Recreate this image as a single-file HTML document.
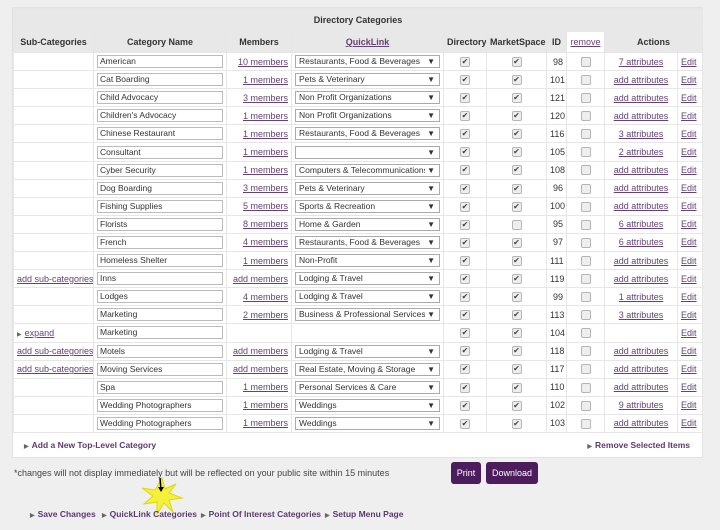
<!DOCTYPE html>
<html><head><meta charset="utf-8"><style>
body{margin:0;width:720px;height:530px;background:#efefef;font-family:"Liberation Sans",sans-serif;font-size:9px;color:#333;overflow:hidden;position:relative}
.panel{position:absolute;left:12px;top:7px;width:689px;background:#fff;border:1px solid #e2e2e2}
table{border-collapse:collapse;table-layout:fixed;width:689px}
td,th{border:1px solid #e6e6e6;padding:0 3px;height:17.1px;white-space:nowrap;overflow:hidden;vertical-align:middle}
th{background:#e8e8e8;font-weight:bold;font-size:9px;height:20px;color:#333}
.title th{height:22px;border-bottom:1px solid #e8e8e8}
a{color:#634276;text-decoration:underline}
.in{border:1px solid #bbb;height:13px;line-height:11px;padding-left:2px;font-size:8.5px;background:#fff;box-sizing:border-box;overflow:hidden}
.sel{border:1px solid #aaa;height:13px;line-height:11px;padding-left:3px;font-size:8.5px;position:relative;background:#fff;box-sizing:border-box;overflow:hidden}
.sel:after{content:"▼";position:absolute;right:4px;top:0;font-size:8px;background:#fff;padding-left:2px}
.c{text-align:center}.r{text-align:right}
.cb{display:inline-block;width:8px;height:8px;border:1px solid #b5b5b5;border-radius:2px;background:#eee;vertical-align:middle;font-size:8px;line-height:8px;text-align:center;color:#444}
.tri{font-size:6px;color:#666;margin-right:3px}
.fl{color:#5b3a6e;font-weight:bold;font-size:8.5px}
.btn{position:absolute;background:#4d1c5c;color:#fff;border-radius:3px;font-size:9px;text-align:center;line-height:22px;height:22px}
</style></head><body>
<div class="panel">
<table>
<colgroup><col style="width:80px"><col style="width:133px"><col style="width:65px"><col style="width:152px"><col style="width:43px"><col style="width:60px"><col style="width:20px"><col style="width:38px"><col style="width:73px"><col style="width:25px"></colgroup>
<tr class="title"><th colspan="10">Directory Categories</th></tr>
<tr><th>Sub-Categories</th><th>Category Name</th><th>Members</th><th><a>QuickLink</a></th><th>Directory</th><th>MarketSpace</th><th>ID</th><th style="background:#fff;font-weight:normal"><a>remove</a></th><th colspan="2">Actions</th></tr>
<tr><td></td><td><div class="in">American</div></td><td class="r"><a>10 members</a></td><td><div class="sel">Restaurants, Food &amp; Beverages</div></td><td class="c"><span class="cb">✔</span></td><td class="c"><span class="cb">✔</span></td><td class="r">98</td><td class="c"><span class="cb"></span></td><td class="c"><a>7 attributes</a></td><td><a>Edit</a></td></tr>
<tr><td></td><td><div class="in">Cat Boarding</div></td><td class="r"><a>1 members</a></td><td><div class="sel">Pets &amp; Veterinary</div></td><td class="c"><span class="cb">✔</span></td><td class="c"><span class="cb">✔</span></td><td class="r">101</td><td class="c"><span class="cb"></span></td><td class="c"><a>add attributes</a></td><td><a>Edit</a></td></tr>
<tr><td></td><td><div class="in">Child Advocacy</div></td><td class="r"><a>3 members</a></td><td><div class="sel">Non Profit Organizations</div></td><td class="c"><span class="cb">✔</span></td><td class="c"><span class="cb">✔</span></td><td class="r">121</td><td class="c"><span class="cb"></span></td><td class="c"><a>add attributes</a></td><td><a>Edit</a></td></tr>
<tr><td></td><td><div class="in">Children's Advocacy</div></td><td class="r"><a>1 members</a></td><td><div class="sel">Non Profit Organizations</div></td><td class="c"><span class="cb">✔</span></td><td class="c"><span class="cb">✔</span></td><td class="r">120</td><td class="c"><span class="cb"></span></td><td class="c"><a>add attributes</a></td><td><a>Edit</a></td></tr>
<tr><td></td><td><div class="in">Chinese Restaurant</div></td><td class="r"><a>1 members</a></td><td><div class="sel">Restaurants, Food &amp; Beverages</div></td><td class="c"><span class="cb">✔</span></td><td class="c"><span class="cb">✔</span></td><td class="r">116</td><td class="c"><span class="cb"></span></td><td class="c"><a>3 attributes</a></td><td><a>Edit</a></td></tr>
<tr><td></td><td><div class="in">Consultant</div></td><td class="r"><a>1 members</a></td><td><div class="sel">&nbsp;</div></td><td class="c"><span class="cb">✔</span></td><td class="c"><span class="cb">✔</span></td><td class="r">105</td><td class="c"><span class="cb"></span></td><td class="c"><a>2 attributes</a></td><td><a>Edit</a></td></tr>
<tr><td></td><td><div class="in">Cyber Security</div></td><td class="r"><a>1 members</a></td><td><div class="sel">Computers &amp; Telecommunications</div></td><td class="c"><span class="cb">✔</span></td><td class="c"><span class="cb">✔</span></td><td class="r">108</td><td class="c"><span class="cb"></span></td><td class="c"><a>add attributes</a></td><td><a>Edit</a></td></tr>
<tr><td></td><td><div class="in">Dog Boarding</div></td><td class="r"><a>3 members</a></td><td><div class="sel">Pets &amp; Veterinary</div></td><td class="c"><span class="cb">✔</span></td><td class="c"><span class="cb">✔</span></td><td class="r">96</td><td class="c"><span class="cb"></span></td><td class="c"><a>add attributes</a></td><td><a>Edit</a></td></tr>
<tr><td></td><td><div class="in">Fishing Supplies</div></td><td class="r"><a>5 members</a></td><td><div class="sel">Sports &amp; Recreation</div></td><td class="c"><span class="cb">✔</span></td><td class="c"><span class="cb">✔</span></td><td class="r">100</td><td class="c"><span class="cb"></span></td><td class="c"><a>add attributes</a></td><td><a>Edit</a></td></tr>
<tr><td></td><td><div class="in">Florists</div></td><td class="r"><a>8 members</a></td><td><div class="sel">Home &amp; Garden</div></td><td class="c"><span class="cb">✔</span></td><td class="c"><span class="cb"></span></td><td class="r">95</td><td class="c"><span class="cb"></span></td><td class="c"><a>6 attributes</a></td><td><a>Edit</a></td></tr>
<tr><td></td><td><div class="in">French</div></td><td class="r"><a>4 members</a></td><td><div class="sel">Restaurants, Food &amp; Beverages</div></td><td class="c"><span class="cb">✔</span></td><td class="c"><span class="cb">✔</span></td><td class="r">97</td><td class="c"><span class="cb"></span></td><td class="c"><a>6 attributes</a></td><td><a>Edit</a></td></tr>
<tr><td></td><td><div class="in">Homeless Shelter</div></td><td class="r"><a>1 members</a></td><td><div class="sel">Non-Profit</div></td><td class="c"><span class="cb">✔</span></td><td class="c"><span class="cb">✔</span></td><td class="r">111</td><td class="c"><span class="cb"></span></td><td class="c"><a>add attributes</a></td><td><a>Edit</a></td></tr>
<tr><td><a>add sub-categories</a></td><td><div class="in">Inns</div></td><td class="r"><a>add members</a></td><td><div class="sel">Lodging &amp; Travel</div></td><td class="c"><span class="cb">✔</span></td><td class="c"><span class="cb">✔</span></td><td class="r">119</td><td class="c"><span class="cb"></span></td><td class="c"><a>add attributes</a></td><td><a>Edit</a></td></tr>
<tr><td></td><td><div class="in">Lodges</div></td><td class="r"><a>4 members</a></td><td><div class="sel">Lodging &amp; Travel</div></td><td class="c"><span class="cb">✔</span></td><td class="c"><span class="cb">✔</span></td><td class="r">99</td><td class="c"><span class="cb"></span></td><td class="c"><a>1 attributes</a></td><td><a>Edit</a></td></tr>
<tr><td></td><td><div class="in">Marketing</div></td><td class="r"><a>2 members</a></td><td><div class="sel">Business &amp; Professional Services</div></td><td class="c"><span class="cb">✔</span></td><td class="c"><span class="cb">✔</span></td><td class="r">113</td><td class="c"><span class="cb"></span></td><td class="c"><a>3 attributes</a></td><td><a>Edit</a></td></tr>
<tr><td><span class="tri">▶</span><a>expand</a></td><td><div class="in">Marketing</div></td><td></td><td></td><td class="c"><span class="cb">✔</span></td><td class="c"><span class="cb">✔</span></td><td class="r">104</td><td class="c"><span class="cb"></span></td><td></td><td><a>Edit</a></td></tr>
<tr><td><a>add sub-categories</a></td><td><div class="in">Motels</div></td><td class="r"><a>add members</a></td><td><div class="sel">Lodging &amp; Travel</div></td><td class="c"><span class="cb">✔</span></td><td class="c"><span class="cb">✔</span></td><td class="r">118</td><td class="c"><span class="cb"></span></td><td class="c"><a>add attributes</a></td><td><a>Edit</a></td></tr>
<tr><td><a>add sub-categories</a></td><td><div class="in">Moving Services</div></td><td class="r"><a>add members</a></td><td><div class="sel">Real Estate, Moving &amp; Storage</div></td><td class="c"><span class="cb">✔</span></td><td class="c"><span class="cb">✔</span></td><td class="r">117</td><td class="c"><span class="cb"></span></td><td class="c"><a>add attributes</a></td><td><a>Edit</a></td></tr>
<tr><td></td><td><div class="in">Spa</div></td><td class="r"><a>1 members</a></td><td><div class="sel">Personal Services &amp; Care</div></td><td class="c"><span class="cb">✔</span></td><td class="c"><span class="cb">✔</span></td><td class="r">110</td><td class="c"><span class="cb"></span></td><td class="c"><a>add attributes</a></td><td><a>Edit</a></td></tr>
<tr><td></td><td><div class="in">Wedding Photographers</div></td><td class="r"><a>1 members</a></td><td><div class="sel">Weddings</div></td><td class="c"><span class="cb">✔</span></td><td class="c"><span class="cb">✔</span></td><td class="r">102</td><td class="c"><span class="cb"></span></td><td class="c"><a>9 attributes</a></td><td><a>Edit</a></td></tr>
<tr><td></td><td><div class="in">Wedding Photographers</div></td><td class="r"><a>1 members</a></td><td><div class="sel">Weddings</div></td><td class="c"><span class="cb">✔</span></td><td class="c"><span class="cb">✔</span></td><td class="r">103</td><td class="c"><span class="cb"></span></td><td class="c"><a>add attributes</a></td><td><a>Edit</a></td></tr>
</table>
<div style="height:24px;position:relative">
<span class="fl" style="position:absolute;left:11px;top:7px"><span class="tri">▶</span>Add a New Top-Level Category</span>
<span class="fl" style="position:absolute;right:12px;top:7px"><span class="tri">▶</span>Remove Selected Items</span>
</div>
</div>
<div style="position:absolute;left:14px;top:468px;font-size:9px;color:#444">*changes will not display immediately but will be reflected on your public site within 15 minutes</div>
<div class="btn" style="left:451px;top:462px;width:30px">Print</div>
<div class="btn" style="left:486px;top:462px;width:52px">Download</div>
<svg style="position:absolute;left:140px;top:476px" width="44" height="40" viewBox="0 0 44 40"><polygon points="22,2 25,13 36,8 29,17 42,22 29,24 33,36 24,27 17,38 17,26 4,28 13,20 2,12 15,14" fill="#f5f03a" stroke="#e0d800" stroke-width="1"/><line x1="20" y1="2" x2="21" y2="14" stroke="#000" stroke-width="1.5"/><polygon points="18,11 24,11 21,16" fill="#000"/></svg>
<div class="fl" style="position:absolute;left:30px;top:509px"><span class="tri">▶</span>Save Changes</div>
<div class="fl" style="position:absolute;left:102px;top:509px"><span class="tri">▶</span>QuickLink Categories</div>
<div class="fl" style="position:absolute;left:201px;top:509px"><span class="tri">▶</span>Point Of Interest Categories</div>
<div class="fl" style="position:absolute;left:325px;top:509px"><span class="tri">▶</span>Setup Menu Page</div>
</body></html>
